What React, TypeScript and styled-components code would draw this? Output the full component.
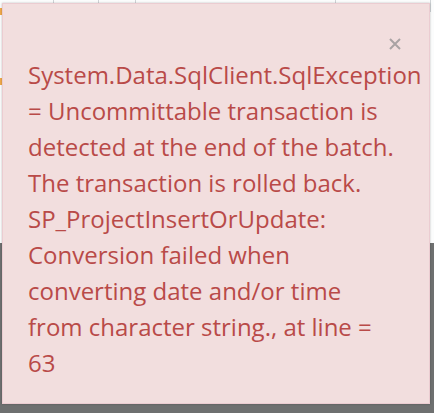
import React from "react";
import styled, { createGlobalStyle } from "styled-components";

const GlobalStyle = createGlobalStyle`
  html, body {
    margin: 0;
    padding: 0;
    width: 434px;
    height: 413px;
    overflow: hidden;
  }
  body {
    font-family: "Open Sans", "Noto Sans", sans-serif;
  }
`;

const Page = styled.div`
  position: relative;
  width: 434px;
  height: 413px;
  display: flex;
  flex-direction: column;
  background: #6e7070;
`;

const Grid = styled.div`
  height: 243px;
  background: #fbfcfc;
  display: flex;
  align-items: flex-start;
`;

const Column = styled.div<{ $w: number }>`
  width: ${(p) => p.$w}px;
  height: 12px;
  border-right: 1px solid #cfd3d6;
  box-sizing: border-box;
  flex-shrink: 0;
`;

const Marker = styled.div<{ $top: number }>`
  position: absolute;
  left: 0;
  top: ${(p) => p.$top}px;
  width: 2px;
  height: 7px;
  background: #f0a94a;
`;

const Alert = styled.div`
  position: absolute;
  top: 3px;
  left: 2px;
  width: 428px;
  box-sizing: border-box;
  padding: 34px 33px 22px 25px;
  background: #f2dede;
  border: 1px solid #ebccd1;
  box-shadow: 0 0 2px rgba(0, 0, 0, 0.25);
  color: #b94a48;
`;

const CloseRow = styled.div`
  display: flex;
  justify-content: flex-end;
  height: 12px;
  margin: 0 -5px 7px 0;
`;

const CloseButton = styled.button`
  width: 12px;
  height: 12px;
  padding: 0;
  border: 0;
  background: none;
  cursor: pointer;
  display: flex;
`;

const Message = styled.p`
  margin: 0;
  font-size: 24px;
  line-height: 36px;
  word-wrap: normal;
`;

const App = () => (
  <>
    <GlobalStyle />
    <Page>
      <Grid>
        <Column $w={54} />
        <Column $w={45} />
        <Column $w={37} />
        <Column $w={200} />
        <Column $w={95} />
      </Grid>
      <Marker $top={8} />
      <Marker $top={78} />
      <Alert role="alert">
        <CloseRow>
          <CloseButton aria-label="Close">
            <svg width="12" height="12" viewBox="0 0 12 12">
              <path
                d="M1 1 L11 11 M11 1 L1 11"
                stroke="#a9a3a4"
                strokeWidth="2"
                strokeLinecap="butt"
              />
            </svg>
          </CloseButton>
        </CloseRow>
        <Message>
          System.Data.SqlClient.SqlException = Uncommittable transaction is
          detected at the end of the batch. The transaction is rolled back.
          SP_ProjectInsertOrUpdate: Conversion failed when converting date
          and/or time from character string., at line = 63
        </Message>
      </Alert>
    </Page>
  </>
);

export default App;
